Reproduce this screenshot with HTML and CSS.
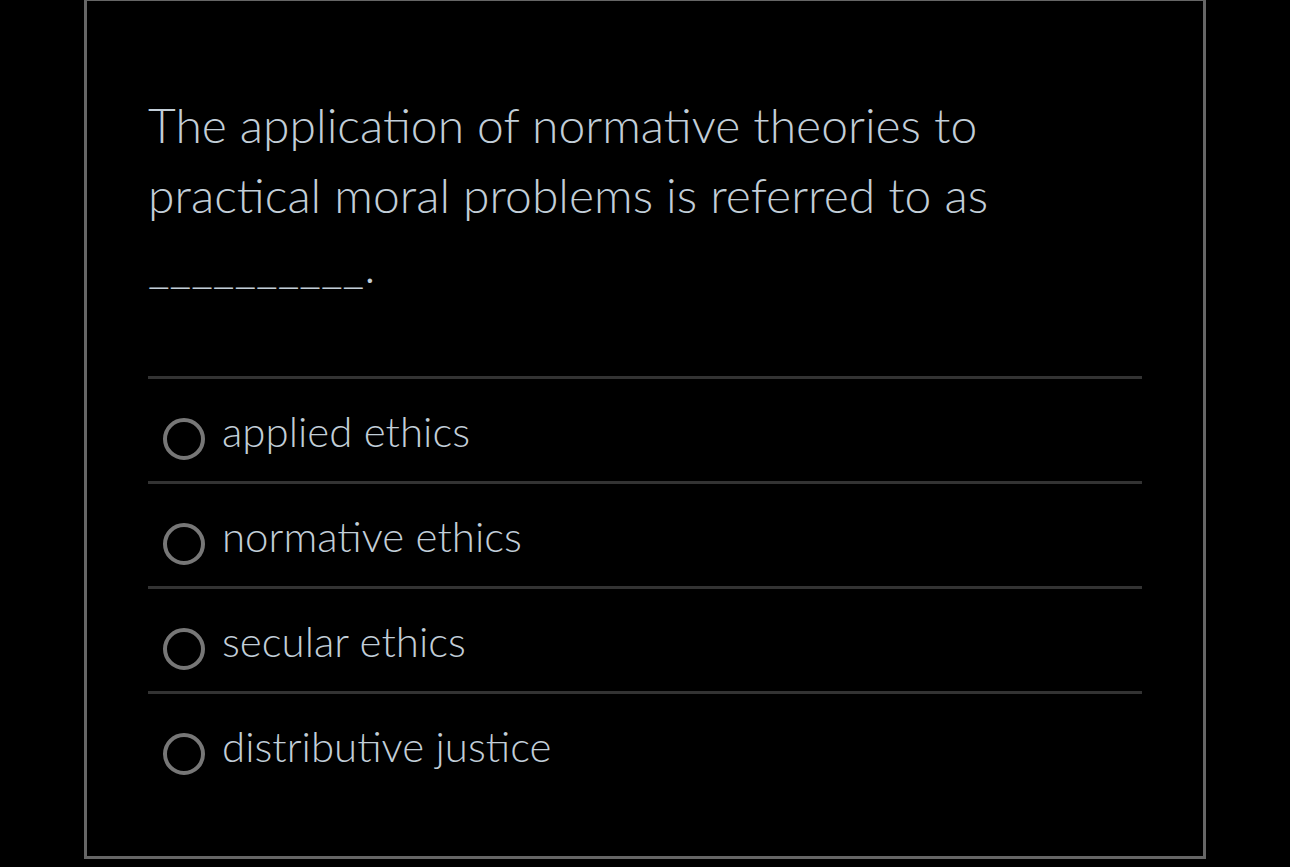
FILE: index.html
```html
<!DOCTYPE html>
<html lang="en">
<head>
  <meta charset="UTF-8">
  <meta name="viewport" content="width=device-width, initial-scale=1.0">
  <title>Quiz Question</title>
  <link rel="stylesheet" href="styles.css">
</head>
<body>
  <div class="question-card">
    <p class="question-text">The application of normative theories to practical moral problems is referred to as __________.</p>

    <div class="answers">
      <label class="answer">
        <input type="radio" name="answer">
        <span class="answer-text">applied ethics</span>
      </label>
      <label class="answer">
        <input type="radio" name="answer">
        <span class="answer-text">normative ethics</span>
      </label>
      <label class="answer">
        <input type="radio" name="answer">
        <span class="answer-text">secular ethics</span>
      </label>
      <label class="answer">
        <input type="radio" name="answer">
        <span class="answer-text">distributive justice</span>
      </label>
    </div>
  </div>
</body>
</html>
```

FILE: styles.css
```css
:root {
  --background-color: #000000;
  --text-color: #c2ced8;
  --card-border: #666666;
  --divider-color: #333333;
  --radio-color: #777777;
}

body {
  margin: 0;
  background-color: var(--background-color);
  color: var(--text-color);
  font-family: "Lato Light", Lato, "Open Sans", sans-serif;
  font-weight: 300;
}

.question-card {
  box-sizing: border-box;
  width: 1122px;
  height: 861px;
  margin: -2px 0 0 84px;
  padding: 89px 61px 0 61px;
  border: 3px solid var(--card-border);
}

.question-text {
  margin: 0 0 76px 0;
  font-size: 48px;
  line-height: 70px;
}

.answers {
  display: flex;
  flex-direction: column;
}

.answer {
  display: flex;
  align-items: center;
  gap: 17px;
  height: 105px;
  box-sizing: border-box;
  padding: 2px 0 0 15px;
  border-top: 3px solid var(--divider-color);
  cursor: pointer;
}

.answer input {
  appearance: none;
  -webkit-appearance: none;
  flex: none;
  width: 42px;
  height: 42px;
  margin: 16px 0 0 0;
  border: 4px solid var(--radio-color);
  border-radius: 50%;
  box-sizing: border-box;
  background: transparent;
}

.answer input:checked {
  background: radial-gradient(circle, var(--radio-color) 40%, transparent 45%);
}

.answer-text {
  font-size: 42px;
  line-height: 46px;
}
```
